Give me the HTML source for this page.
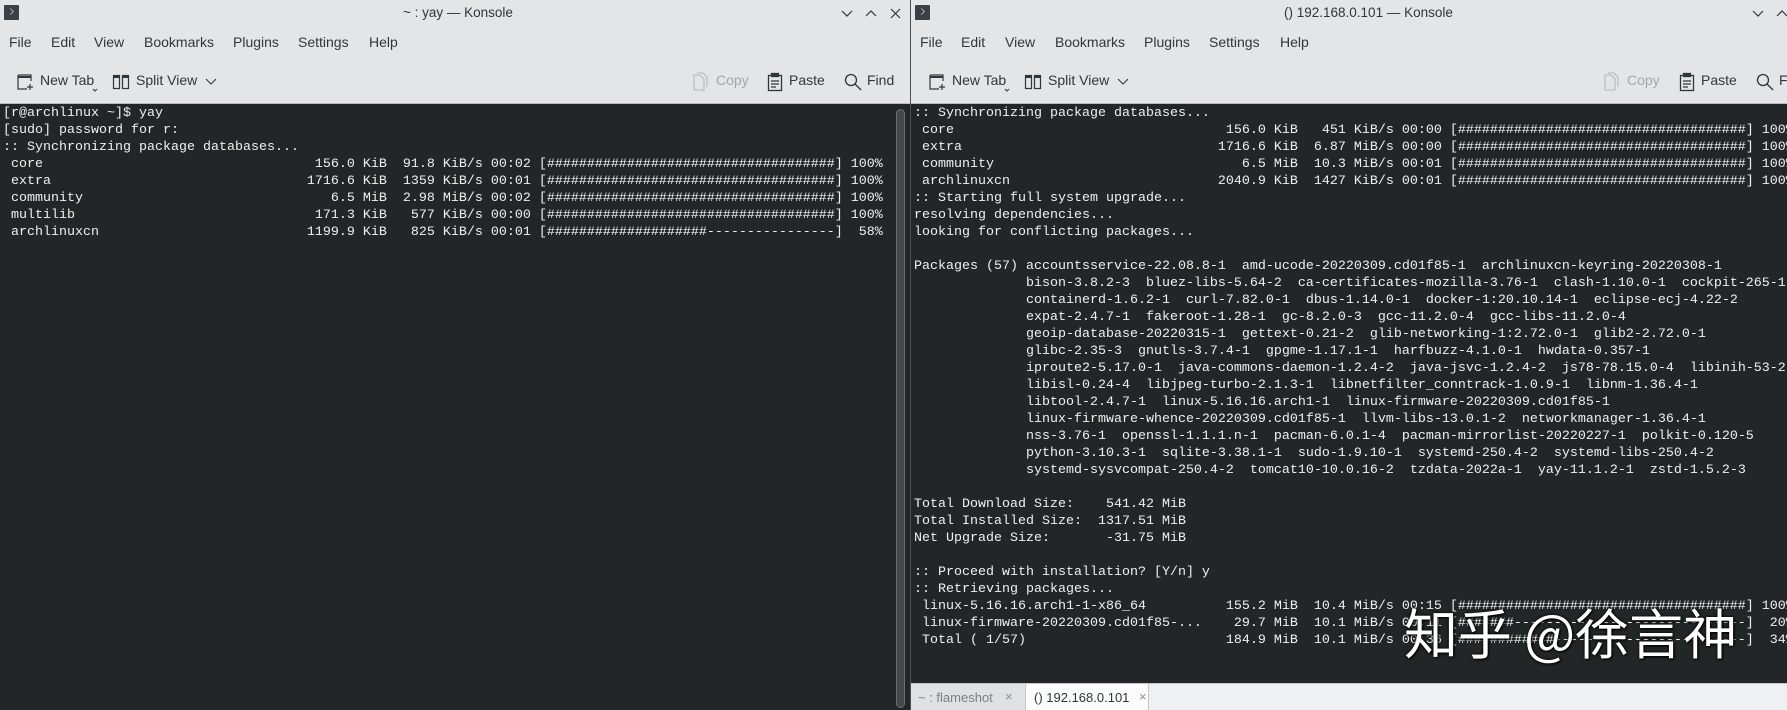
<!DOCTYPE html>
<html><head><meta charset="utf-8"><style>
*{margin:0;padding:0;box-sizing:border-box}
body{width:1787px;height:710px;overflow:hidden;background:#232627;position:relative;font-family:"Liberation Sans","Noto Sans CJK SC",sans-serif}
.win{position:absolute;top:0;height:710px;overflow:hidden}
.hdr{position:absolute;left:0;top:0;width:100%;height:104px;background:#e3e5e7;border-bottom:1px solid #babcbe}
.title{position:absolute;top:5px;font-size:13.5px;color:#31363b;white-space:nowrap}
.ticon{position:absolute;left:4px;top:5px;width:15px;height:15px;background:#3b4045;border-radius:1px}
.ticon:after{content:"";position:absolute;left:4px;top:4px;width:4px;height:4px;border-right:1px solid #aaa;border-top:1px solid #aaa;transform:rotate(45deg)}
.menu{position:absolute;top:34px;font-size:14px;color:#31363b;white-space:nowrap}
.menu span{position:absolute;top:0}
.tb{position:absolute;top:72px;font-size:14px;color:#31363b;white-space:nowrap}
.ico{position:absolute}
.term{position:absolute;top:105px;font-family:"Liberation Mono",monospace;font-size:13.33px;line-height:17px;color:#eff0f1;white-space:pre}
.r{position:relative;height:17px}
.a{display:inline-block;width:48ch;position:relative}
.a b{font-weight:normal;position:absolute;right:0;top:0}
</style></head><body>

<!-- LEFT WINDOW -->
<div class="win" style="left:0;width:910px">
 <div class="hdr"></div>
 <div class="ticon"></div>
 <div class="title" style="left:403px">~ : yay — Konsole</div>
 <svg class="ico" style="left:840px;top:7px" width="70" height="14" viewBox="0 0 70 14" fill="none" stroke="#31363b" stroke-width="1.2"><path d="M2 4l5 5 5-5"/><path d="M26 9l5-5 5 5"/><path d="M51 2l9 9M60 2l-9 9"/></svg>
 <div class="menu" style="left:0;width:900px">
  <span style="left:9px">File</span><span style="left:51px">Edit</span><span style="left:94px">View</span><span style="left:144px">Bookmarks</span><span style="left:233px">Plugins</span><span style="left:298px">Settings</span><span style="left:369px">Help</span>
 </div>
 <svg class="ico" style="left:16px;top:72px" width="20" height="20" viewBox="0 0 20 20" fill="none" stroke="#31363b" stroke-width="1.2"><path d="M2 3h13v6M2 3v14h9"/><path d="M2 5h13" stroke-width="2"/><path d="M14 12v6M11 15h6"/></svg>
 <div class="tb" style="left:40px">New Tab</div>
 <svg class="ico" style="left:92px;top:88px" width="6" height="5" viewBox="0 0 6 5" fill="none" stroke="#31363b"><path d="M1 1l2 2 2-2"/></svg>
 <svg class="ico" style="left:112px;top:73px" width="18" height="18" viewBox="0 0 18 18" fill="none" stroke="#31363b" stroke-width="1.2"><rect x="1.5" y="2.5" width="6" height="13"/><rect x="10.5" y="2.5" width="6" height="13"/><path d="M1.5 4h6M10.5 4h6" stroke-width="2"/></svg>
 <div class="tb" style="left:136px">Split View</div>
 <svg class="ico" style="left:205px;top:78px" width="12" height="8" viewBox="0 0 12 8" fill="none" stroke="#31363b" stroke-width="1.1"><path d="M1 1l5 5 5-5"/></svg>
 <svg class="ico" style="left:692px;top:72px" width="18" height="20" viewBox="0 0 18 20" fill="none" stroke="#b5b8ba" stroke-width="1.1"><path d="M2 3h6l4 4v11H2z"/><path d="M5 1h6l4 4v10"/></svg>
 <div class="tb" style="left:716px;color:#a4a7aa">Copy</div>
 <svg class="ico" style="left:767px;top:72px" width="16" height="20" viewBox="0 0 16 20" fill="none" stroke="#31363b" stroke-width="1.3"><rect x="1.5" y="3.5" width="13" height="15"/><rect x="4.5" y="1.5" width="7" height="3" fill="#31363b"/><path d="M4 9h8M4 12h8M4 15h5"/></svg>
 <div class="tb" style="left:789px">Paste</div>
 <svg class="ico" style="left:844px;top:73px" width="18" height="18" viewBox="0 0 18 18" fill="none" stroke="#31363b" stroke-width="1.3"><circle cx="7" cy="7" r="5.5"/><path d="M11 11l6 6"/></svg>
 <div class="tb" style="left:867px">Find</div>

 <div class="term" style="left:3px;width:890px"><div class="r">[r@archlinux ~]$ yay</div><div class="r">[sudo] password for r:</div><div class="r">:: Synchronizing package databases...</div><div class="r"><span class="a"> core<b>156.0 KiB</b></span>  91.8 KiB/s 00:02 [####################################] 100%</div><div class="r"><span class="a"> extra<b>1716.6 KiB</b></span>  1359 KiB/s 00:01 [####################################] 100%</div><div class="r"><span class="a"> community<b>6.5 MiB</b></span>  2.98 MiB/s 00:02 [####################################] 100%</div><div class="r"><span class="a"> multilib<b>171.3 KiB</b></span>   577 KiB/s 00:00 [####################################] 100%</div><div class="r"><span class="a"> archlinuxcn<b>1199.9 KiB</b></span>   825 KiB/s 00:01 [####################----------------]  58%</div></div>
 <div style="position:absolute;left:896px;top:109px;width:9px;height:599px;background:#44484c;border:1px solid #6a6e72;border-radius:5px"></div>
</div>

<!-- RIGHT WINDOW -->
<div class="win" style="left:910px;width:877px;border-left:1px solid #4d5155">
 <div class="hdr"></div>
 <div class="ticon"></div>
 <div class="title" style="left:373px">() 192.168.0.101 — Konsole</div>
 <svg class="ico" style="left:840px;top:7px" width="40" height="14" viewBox="0 0 40 14" fill="none" stroke="#31363b" stroke-width="1.2"><path d="M2 4l5 5 5-5"/><path d="M26 9l5-5 5 5"/></svg>
 <div class="menu" style="left:0;width:870px">
  <span style="left:9px">File</span><span style="left:50px">Edit</span><span style="left:94px">View</span><span style="left:144px">Bookmarks</span><span style="left:233px">Plugins</span><span style="left:298px">Settings</span><span style="left:369px">Help</span>
 </div>
 <svg class="ico" style="left:17px;top:72px" width="20" height="20" viewBox="0 0 20 20" fill="none" stroke="#31363b" stroke-width="1.2"><path d="M2 3h13v6M2 3v14h9"/><path d="M2 5h13" stroke-width="2"/><path d="M14 12v6M11 15h6"/></svg>
 <div class="tb" style="left:41px">New Tab</div>
 <svg class="ico" style="left:93px;top:88px" width="6" height="5" viewBox="0 0 6 5" fill="none" stroke="#31363b"><path d="M1 1l2 2 2-2"/></svg>
 <svg class="ico" style="left:113px;top:73px" width="18" height="18" viewBox="0 0 18 18" fill="none" stroke="#31363b" stroke-width="1.2"><rect x="1.5" y="2.5" width="6" height="13"/><rect x="10.5" y="2.5" width="6" height="13"/><path d="M1.5 4h6M10.5 4h6" stroke-width="2"/></svg>
 <div class="tb" style="left:137px">Split View</div>
 <svg class="ico" style="left:206px;top:78px" width="12" height="8" viewBox="0 0 12 8" fill="none" stroke="#31363b" stroke-width="1.1"><path d="M1 1l5 5 5-5"/></svg>
 <svg class="ico" style="left:692px;top:72px" width="18" height="20" viewBox="0 0 18 20" fill="none" stroke="#b5b8ba" stroke-width="1.1"><path d="M2 3h6l4 4v11H2z"/><path d="M5 1h6l4 4v10"/></svg>
 <div class="tb" style="left:716px;color:#a4a7aa">Copy</div>
 <svg class="ico" style="left:768px;top:72px" width="16" height="20" viewBox="0 0 16 20" fill="none" stroke="#31363b" stroke-width="1.3"><rect x="1.5" y="3.5" width="13" height="15"/><rect x="4.5" y="1.5" width="7" height="3" fill="#31363b"/><path d="M4 9h8M4 12h8M4 15h5"/></svg>
 <div class="tb" style="left:790px">Paste</div>
 <svg class="ico" style="left:845px;top:73px" width="18" height="18" viewBox="0 0 18 18" fill="none" stroke="#31363b" stroke-width="1.3"><circle cx="7" cy="7" r="5.5"/><path d="M11 11l6 6"/></svg>
 <div class="tb" style="left:868px">Find</div>

 <div class="term" style="left:3px;width:1000px"><div class="r">:: Synchronizing package databases...</div><div class="r"><span class="a"> core<b>156.0 KiB</b></span>   451 KiB/s 00:00 [####################################] 100%</div><div class="r"><span class="a"> extra<b>1716.6 KiB</b></span>  6.87 MiB/s 00:00 [####################################] 100%</div><div class="r"><span class="a"> community<b>6.5 MiB</b></span>  10.3 MiB/s 00:01 [####################################] 100%</div><div class="r"><span class="a"> archlinuxcn<b>2040.9 KiB</b></span>  1427 KiB/s 00:01 [####################################] 100%</div><div class="r">:: Starting full system upgrade...</div><div class="r">resolving dependencies...</div><div class="r">looking for conflicting packages...</div><div class="r"> </div><div class="r">Packages (57) accountsservice-22.08.8-1  amd-ucode-20220309.cd01f85-1  archlinuxcn-keyring-20220308-1</div><div class="r">              bison-3.8.2-3  bluez-libs-5.64-2  ca-certificates-mozilla-3.76-1  clash-1.10.0-1  cockpit-265-1</div><div class="r">              containerd-1.6.2-1  curl-7.82.0-1  dbus-1.14.0-1  docker-1:20.10.14-1  eclipse-ecj-4.22-2</div><div class="r">              expat-2.4.7-1  fakeroot-1.28-1  gc-8.2.0-3  gcc-11.2.0-4  gcc-libs-11.2.0-4</div><div class="r">              geoip-database-20220315-1  gettext-0.21-2  glib-networking-1:2.72.0-1  glib2-2.72.0-1</div><div class="r">              glibc-2.35-3  gnutls-3.7.4-1  gpgme-1.17.1-1  harfbuzz-4.1.0-1  hwdata-0.357-1</div><div class="r">              iproute2-5.17.0-1  java-commons-daemon-1.2.4-2  java-jsvc-1.2.4-2  js78-78.15.0-4  libinih-53-2</div><div class="r">              libisl-0.24-4  libjpeg-turbo-2.1.3-1  libnetfilter_conntrack-1.0.9-1  libnm-1.36.4-1</div><div class="r">              libtool-2.4.7-1  linux-5.16.16.arch1-1  linux-firmware-20220309.cd01f85-1</div><div class="r">              linux-firmware-whence-20220309.cd01f85-1  llvm-libs-13.0.1-2  networkmanager-1.36.4-1</div><div class="r">              nss-3.76-1  openssl-1.1.1.n-1  pacman-6.0.1-4  pacman-mirrorlist-20220227-1  polkit-0.120-5</div><div class="r">              python-3.10.3-1  sqlite-3.38.1-1  sudo-1.9.10-1  systemd-250.4-2  systemd-libs-250.4-2</div><div class="r">              systemd-sysvcompat-250.4-2  tomcat10-10.0.16-2  tzdata-2022a-1  yay-11.1.2-1  zstd-1.5.2-3</div><div class="r"> </div><div class="r">Total Download Size:    541.42 MiB</div><div class="r">Total Installed Size:  1317.51 MiB</div><div class="r">Net Upgrade Size:       -31.75 MiB</div><div class="r"> </div><div class="r">:: Proceed with installation? [Y/n] y</div><div class="r">:: Retrieving packages...</div><div class="r"><span class="a"> linux-5.16.16.arch1-1-x86_64<b>155.2 MiB</b></span>  10.4 MiB/s 00:15 [####################################] 100%</div><div class="r"><span class="a"> linux-firmware-20220309.cd01f85-...<b>29.7 MiB</b></span>  10.1 MiB/s 00:11 [#######-----------------------------]  20%</div><div class="r"><span class="a"> Total ( 1/57)<b>184.9 MiB</b></span>  10.1 MiB/s 00:36 [############------------------------]  34%</div></div>

 <div style="position:absolute;left:493px;top:595px;font-family:'Noto Sans CJK SC',sans-serif;font-size:54px;line-height:72px;color:#fff;white-space:nowrap;text-shadow:0 0 3px #000,1px 1px 2px #000">知乎 @徐言神</div>

 <div style="position:absolute;left:0;top:683px;width:877px;height:27px;background:#eff0f1;border-top:1px solid #c4c6c8"></div>
 <div style="position:absolute;left:0;top:684px;width:114px;height:26px;background:#dfe1e3"></div>
 <div style="position:absolute;left:114px;top:684px;width:124px;height:26px;background:#fcfcfc;border-left:1px solid #c4c6c8;border-right:1px solid #c4c6c8"></div>
 <div style="position:absolute;left:7px;top:690px;font-size:13px;color:#7a7e82;white-space:nowrap">~ : flameshot</div>
 <div style="position:absolute;left:94px;top:689px;font-size:13px;color:#8a8e92">×</div>
 <div style="position:absolute;left:123px;top:690px;font-size:13px;color:#31363b;white-space:nowrap">() 192.168.0.101</div>
 <div style="position:absolute;left:228px;top:689px;font-size:13px;color:#8a8e92">×</div>
</div>
</body></html>
